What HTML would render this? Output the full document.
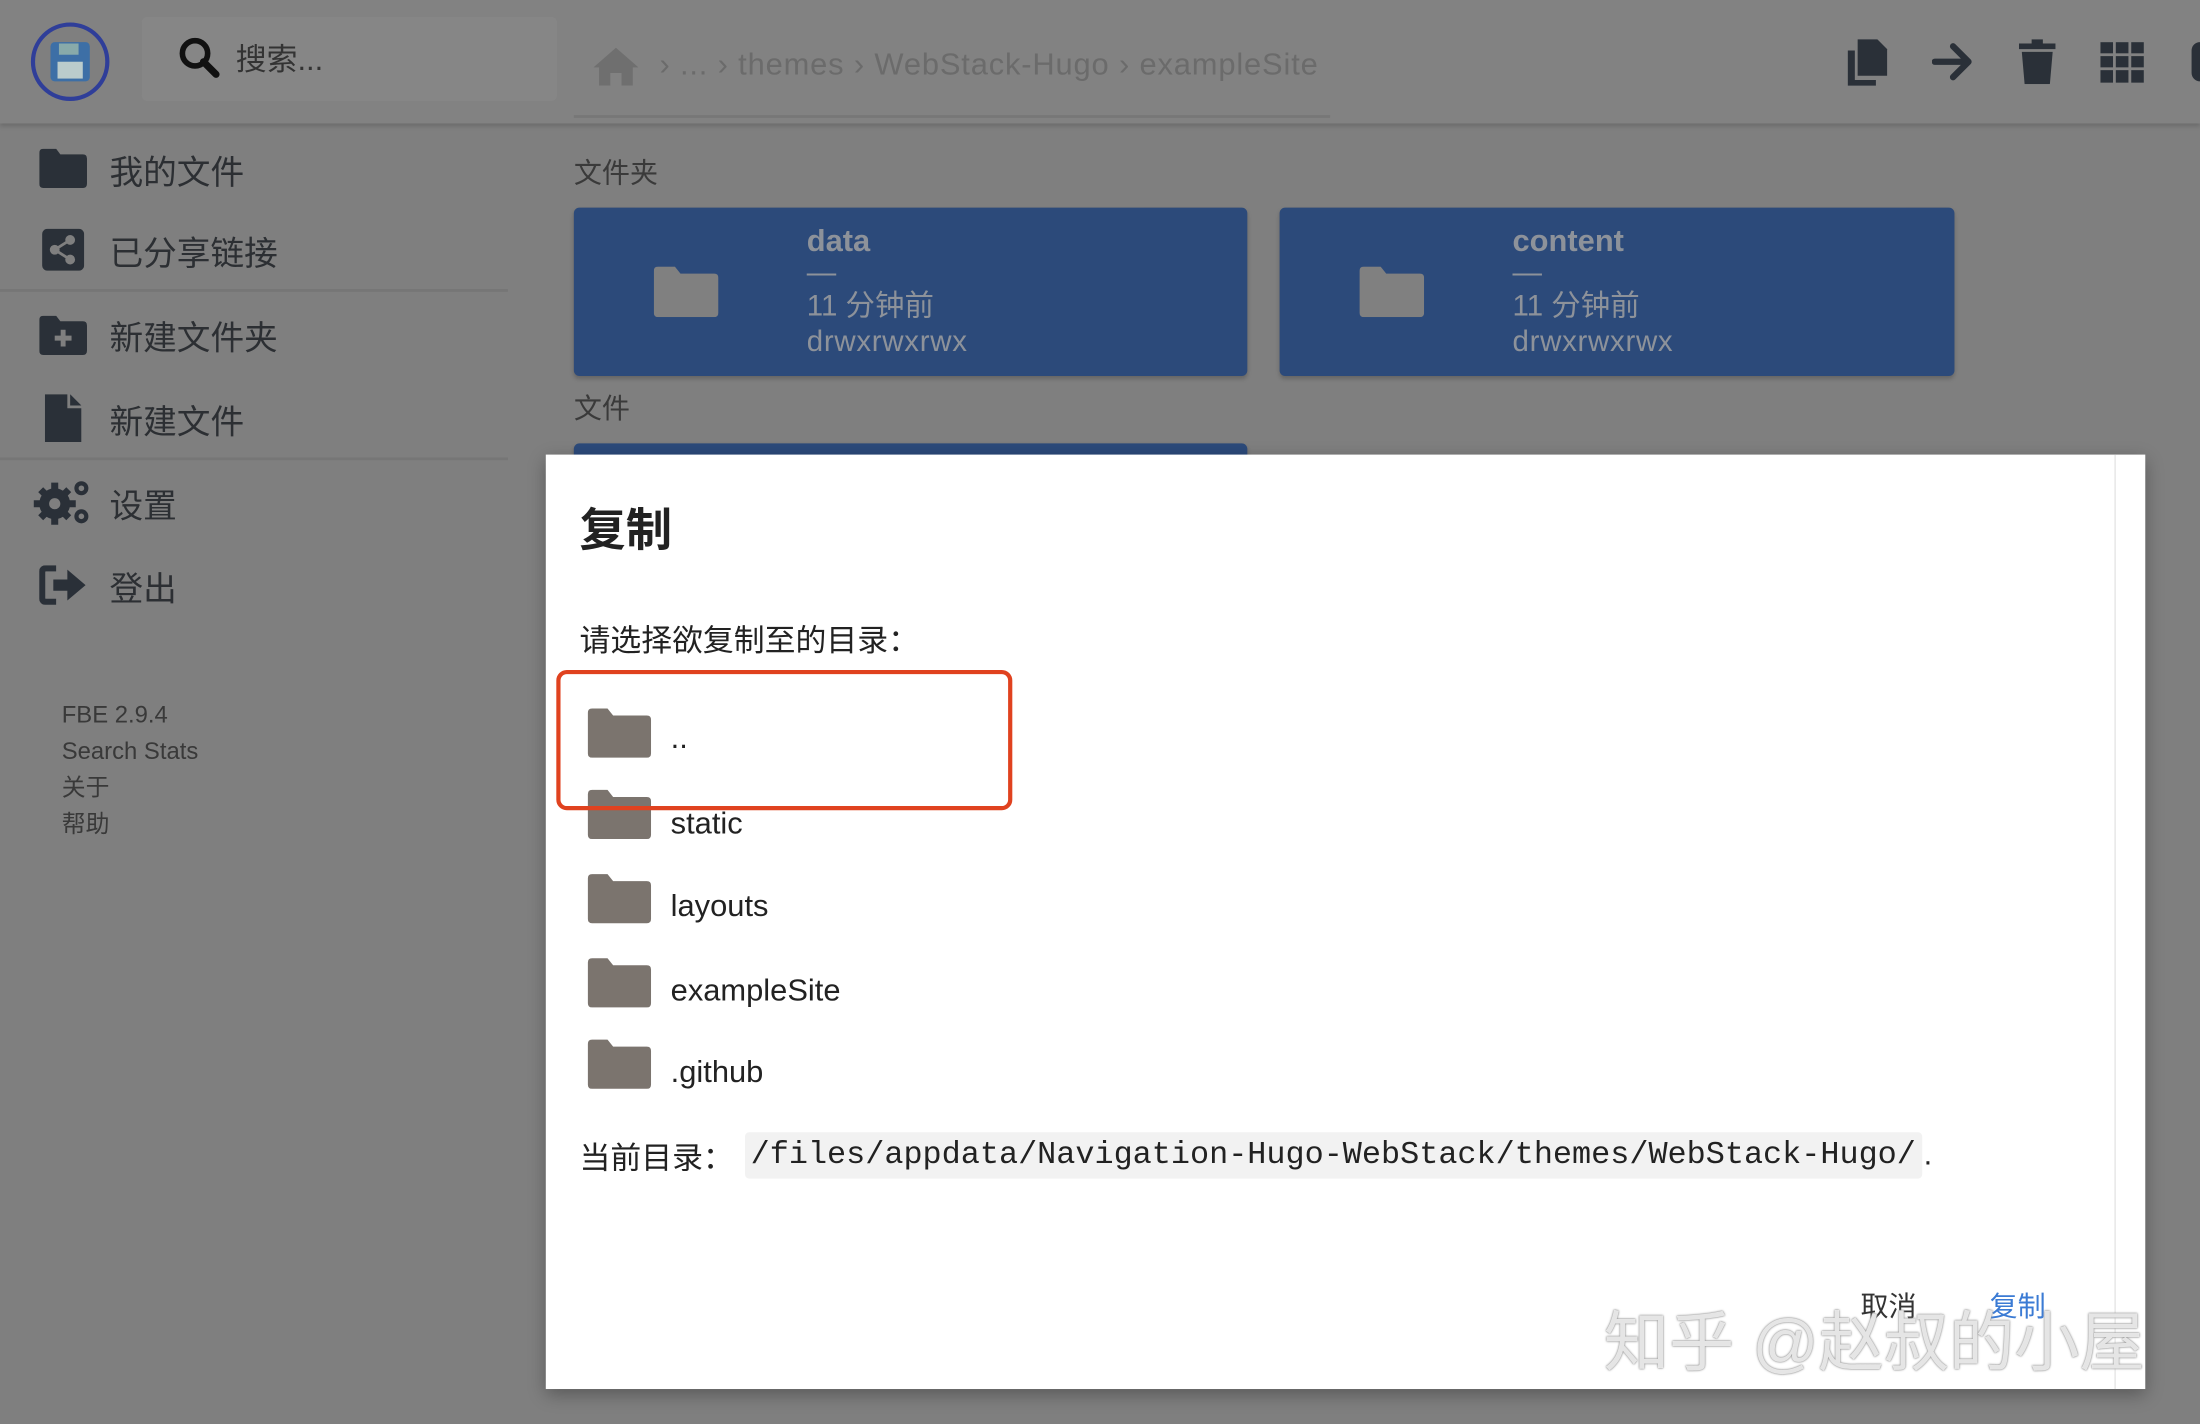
<!DOCTYPE html>
<html><head><meta charset="utf-8"><style>
html,body{margin:0;padding:0;width:2200px;height:1424px;overflow:hidden;background:#7f7f7f}
#s{position:absolute;left:0;top:0;width:1568px;height:1015px;transform:scale(1.40306);transform-origin:0 0;background:#7f7f7f;font-family:"Liberation Sans","Noto Sans CJK SC",sans-serif;color:#2e2e2e}
.a{position:absolute;white-space:nowrap}
.nav{font-size:24px;color:#2c2f33}
.ic{position:absolute;fill:#2a3038}
.card{position:absolute;background:#2c4a7a;border-radius:4px;box-shadow:0 2px 3px rgba(0,0,0,.2)}
.card .t{position:absolute;left:166px;color:#8d929a;font-size:21px;line-height:26px}
.li{font-size:22px;color:#222}
</style></head><body><div id="s">
<!-- header -->
<div class="a" style="left:0;top:0;width:1568px;height:88px;background:#828282;box-shadow:0 2px 3px rgba(0,0,0,.15)"></div>
<div class="a" style="left:22px;top:16px;width:56px;height:56px;border:3px solid #2f3e99;border-radius:50%;box-sizing:border-box;background:#7f7f7f"></div>
<svg class="ic" style="left:35px;top:29px" width="30" height="30" viewBox="0 0 30 30"><rect x="1" y="1" width="28" height="28" rx="3" fill="#3d6fa6"/><rect x="7" y="2" width="14" height="8" fill="#8aa"/><rect x="6" y="15" width="18" height="12" fill="#bcc"/></svg>
<div class="a" style="left:101px;top:12px;width:296px;height:60px;background:#868686;border-radius:4px"></div>
<svg class="ic" style="left:126px;top:25px" width="32" height="32" viewBox="0 0 32 32"><circle cx="13" cy="13" r="9" fill="none" stroke="#111" stroke-width="4"/><path d="M19 19 L28 28" stroke="#111" stroke-width="5" stroke-linecap="round"/></svg>
<div class="a" style="left:168px;top:25px;font-size:22px;color:#333">搜索...</div>
<svg class="ic" style="left:422px;top:33px;fill:#6f6f6f" width="34" height="28" viewBox="0 0 34 28"><path d="M17 1 L33 15 L29 15 L29 28 L21 28 L21 19 L13 19 L13 28 L5 28 L5 15 L1 15 Z"/></svg>
<div class="a" style="left:470px;top:33px;font-size:22px;color:#6b6b6b;letter-spacing:0.6px">› ... › themes › WebStack-Hugo › exampleSite</div>
<div class="a" style="left:409px;top:82px;width:539px;height:2px;background:#777"></div>
<svg class="ic" style="left:1316px;top:28px" width="30" height="34" viewBox="0 0 30 34"><path d="M8 0 H22 L29 7 V26 H8 Z"/><path d="M1 8 H6 V29 H21 V33 H1 Z"/></svg>
<svg class="ic" style="left:1377px;top:30px" width="30" height="28" viewBox="0 0 30 28"><path d="M2 14 H26 M15 3 L26 14 L15 25" stroke="#2a3038" stroke-width="4.5" fill="none" stroke-linecap="round" stroke-linejoin="round"/></svg>
<svg class="ic" style="left:1439px;top:28px" width="26" height="32" viewBox="0 0 26 32"><rect x="0" y="3" width="26" height="4"/><rect x="9" y="0" width="8" height="4"/><path d="M2 9 H24 L22 32 H4 Z"/></svg>
<svg class="ic" style="left:1497px;top:30px" width="31" height="29" viewBox="0 0 31 29"><rect x="0" y="0" width="9" height="8"/><rect x="11" y="0" width="9" height="8"/><rect x="22" y="0" width="9" height="8"/><rect x="0" y="10" width="9" height="8"/><rect x="11" y="10" width="9" height="8"/><rect x="22" y="10" width="9" height="8"/><rect x="0" y="20" width="9" height="9"/><rect x="11" y="20" width="9" height="9"/><rect x="22" y="20" width="9" height="9"/></svg>
<div class="a" style="left:1562px;top:30px;width:10px;height:28px;background:#2a3038;border-radius:6px 0 0 6px"></div>
<!-- sidebar -->
<svg class="ic" style="left:28px;top:106px" width="34" height="28" viewBox="0 0 34 28"><path d="M0 3 Q0 0 3 0 H12 L15 4 H31 Q34 4 34 7 V25 Q34 28 31 28 H3 Q0 28 0 25 Z"/></svg>
<div class="a nav" style="left:78px;top:103px">我的文件</div>
<svg class="ic" style="left:30px;top:163px" width="30" height="30" viewBox="0 0 30 30"><rect width="30" height="30" rx="4"/><circle cx="20" cy="8" r="3.5" fill="#7f7f7f"/><circle cx="9" cy="15" r="3.5" fill="#7f7f7f"/><circle cx="20" cy="22" r="3.5" fill="#7f7f7f"/><path d="M20 8 L9 15 L20 22" stroke="#7f7f7f" stroke-width="2" fill="none"/></svg>
<div class="a nav" style="left:78px;top:161px">已分享链接</div>
<div class="a" style="left:0;top:206px;width:362px;height:2px;background:#767676"></div>
<svg class="ic" style="left:28px;top:225px" width="34" height="28" viewBox="0 0 34 28"><path d="M0 3 Q0 0 3 0 H12 L15 4 H31 Q34 4 34 7 V25 Q34 28 31 28 H3 Q0 28 0 25 Z"/><path d="M17 10 V22 M11 16 H23" stroke="#7f7f7f" stroke-width="3.5"/></svg>
<div class="a nav" style="left:78px;top:221px">新建文件夹</div>
<svg class="ic" style="left:32px;top:281px" width="26" height="34" viewBox="0 0 26 34"><path d="M0 0 H16 V10 H26 V34 H0 Z"/><path d="M18 0 L26 8 H18 Z"/></svg>
<div class="a nav" style="left:78px;top:281px">新建文件</div>
<div class="a" style="left:0;top:326px;width:362px;height:2px;background:#767676"></div>
<svg class="ic" style="left:24px;top:340px" width="42" height="36" viewBox="0 0 42 36"><circle cx="15" cy="19" r="11"/><g stroke="#2a3038" stroke-width="5"><path d="M15 4 V34 M0 19 H30 M5 9 L25 29 M25 9 L5 29"/></g><circle cx="15" cy="19" r="4" fill="#7f7f7f"/><circle cx="34" cy="8" r="5"/><circle cx="34" cy="28" r="5"/><circle cx="34" cy="8" r="2" fill="#7f7f7f"/><circle cx="34" cy="28" r="2" fill="#7f7f7f"/></svg>
<div class="a nav" style="left:78px;top:341px">设置</div>
<svg class="ic" style="left:28px;top:403px" width="34" height="28" viewBox="0 0 34 28"><path d="M12 2 H5 Q2 2 2 5 V23 Q2 26 5 26 H12" stroke="#2a3038" stroke-width="4.5" fill="none"/><path d="M10 10 H20 V3 L33 14 L20 25 V18 H10 Z"/></svg>
<div class="a nav" style="left:78px;top:400px">登出</div>
<div class="a" style="left:44px;top:497px;font-size:17px;line-height:26px;color:#393939">FBE 2.9.4<br>Search Stats<br>关于<br>帮助</div>
<!-- main -->
<div class="a" style="left:409px;top:107px;font-size:20px;color:#3a3a3a">文件夹</div>
<div class="card" style="left:409px;top:148px;width:480px;height:120px">
<svg class="ic" style="left:57px;top:42px;fill:#808080" width="46" height="36" viewBox="0 0 46 36"><path d="M0 3 Q0 0 3 0 H15 L19 5 H43 Q46 5 46 8 V33 Q46 36 43 36 H3 Q0 36 0 33 Z"/></svg>
<div class="t" style="top:11px;font-weight:bold;font-size:22px">data</div>
<div class="t" style="top:34px">—</div>
<div class="t" style="top:58px">11 分钟前</div>
<div class="t" style="top:83px;letter-spacing:0.5px">drwxrwxrwx</div></div>
<div class="card" style="left:912px;top:148px;width:481px;height:120px">
<svg class="ic" style="left:57px;top:42px;fill:#808080" width="46" height="36" viewBox="0 0 46 36"><path d="M0 3 Q0 0 3 0 H15 L19 5 H43 Q46 5 46 8 V33 Q46 36 43 36 H3 Q0 36 0 33 Z"/></svg>
<div class="t" style="top:11px;font-weight:bold;font-size:22px">content</div>
<div class="t" style="top:34px">—</div>
<div class="t" style="top:58px">11 分钟前</div>
<div class="t" style="top:83px;letter-spacing:0.5px">drwxrwxrwx</div></div>
<div class="a" style="left:409px;top:275px;font-size:20px;color:#3a3a3a">文件</div>
<div class="card" style="left:409px;top:316px;width:480px;height:30px"></div>
<!-- dialog -->
<div class="a" style="left:389px;top:324px;width:1140px;height:666px;background:#fff;box-shadow:0 4px 12px rgba(0,0,0,.3)"></div>
<div class="a" style="left:1507px;top:324px;width:1px;height:666px;background:#e6e6e6"></div>
<div class="a" style="left:413px;top:351px;font-size:33px;font-weight:bold;color:#222">复制</div>
<div class="a li" style="left:413px;top:439px">请选择欲复制至的目录：</div>
<svg style="position:absolute;left:0;top:0" width="1568" height="1015">
<g fill="#7b746e">
<path d="M419 508 Q419 505 422 505 H433 L437 510 H461 Q464 510 464 513 V537 Q464 540 461 540 H422 Q419 540 419 537 Z"/>
<path d="M419 566 Q419 563 422 563 H433 L437 568 H461 Q464 568 464 571 V595 Q464 598 461 598 H422 Q419 598 419 595 Z"/>
<path d="M419 626 Q419 623 422 623 H433 L437 628 H461 Q464 628 464 631 V655 Q464 658 461 658 H422 Q419 658 419 655 Z"/>
<path d="M419 686 Q419 683 422 683 H433 L437 688 H461 Q464 688 464 691 V715 Q464 718 461 718 H422 Q419 718 419 715 Z"/>
<path d="M419 744 Q419 741 422 741 H433 L437 746 H461 Q464 746 464 749 V773 Q464 776 461 776 H422 Q419 776 419 773 Z"/>
</g>
<rect x="398" y="479" width="322" height="97" rx="6" fill="none" stroke="#e0421f" stroke-width="3"/>
</svg>
<div class="a li" style="left:478px;top:513px">..</div>
<div class="a li" style="left:478px;top:574px">static</div>
<div class="a li" style="left:478px;top:633px">layouts</div>
<div class="a li" style="left:478px;top:693px">exampleSite</div>
<div class="a li" style="left:478px;top:751px">.github</div>
<div class="a li" style="left:413px;top:808px">当前目录：</div>
<div class="a" style="left:531px;top:807px;width:839px;height:33px;background:#f2f2f2;border-radius:3px"></div>
<div class="a" style="left:535px;top:810px;font-family:'Liberation Mono',monospace;font-size:22.7px;color:#222">/files/appdata/Navigation-Hugo-WebStack/themes/WebStack-Hugo/</div>
<div class="a li" style="left:1371px;top:810px">.</div>
<div class="a" style="left:1326px;top:915px;font-size:20px;color:#333">取消</div>
<div class="a" style="left:1418px;top:915px;font-size:20px;color:#3b7bd4">复制</div>
<div class="a" style="left:1143px;top:920px;font-size:46.5px;color:rgba(255,255,255,.75);text-shadow:0 0 2px #999,0 0 1px #888">知乎 @赵叔的小屋</div>
</div></body></html>
